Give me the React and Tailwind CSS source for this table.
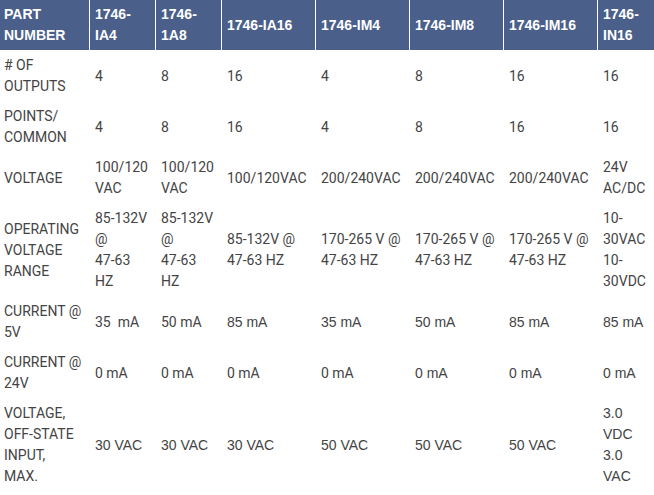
import React from "react";

const heads = [["PART", "NUMBER"], ["1746-", "IA4"], ["1746-", "1A8"], ["1746-IA16"], ["1746-IM4"], ["1746-IM8"], ["1746-IM16"], ["1746-", "IN16"]];

const rows = [
  { cells: [["# OF", "OUTPUTS"], ["4"], ["8"], ["16"], ["4"], ["8"], ["16"], ["16"]] },
  { cells: [["POINTS/", "COMMON"], ["4"], ["8"], ["16"], ["4"], ["8"], ["16"], ["16"]] },
  { cells: [["VOLTAGE"], ["100/120", "VAC"], ["100/120", "VAC"], ["100/120VAC"], ["200/240VAC"], ["200/240VAC"], ["200/240VAC"], ["24V", "AC/DC"]] },
  { cells: [["OPERATING", "VOLTAGE", "RANGE"], ["85-132V", "@", "47-63", "HZ"], ["85-132V", "@", "47-63", "HZ"], ["85-132V @", "47-63 HZ"], ["170-265 V @", "47-63 HZ"], ["170-265 V @", "47-63 HZ"], ["170-265 V @", "47-63 HZ"], ["10-", "30VAC", "10-", "30VDC"]] },
  { cells: [["CURRENT @", "5V"], ["35\u00a0 mA"], ["50 mA"], ["85 mA"], ["35 mA"], ["50 mA"], ["85 mA"], ["85 mA"]], arial: [3, 4, 5, 6, 7, 8] },
  { cells: [["CURRENT @", "24V"], ["0 mA"], ["0 mA"], ["0 mA"], ["0 mA"], ["0 mA"], ["0 mA"], ["0 mA"]], arial: [5, 6, 7, 8] },
  { cells: [["VOLTAGE,", "OFF-STATE", "INPUT,", "MAX."], ["30 VAC"], ["30 VAC"], ["30 VAC"], ["50 VAC"], ["50 VAC"], ["50 VAC"], ["3.0", "VDC", "3.0", "VAC"]], arial: [1, 2, 3, 4, 5, 6, 7] },
];

const grid = "grid grid-cols-[89px_66px_66px_94px_94px_94px_94px_51px]";

function Lines({ lines }) {
  return (
    <div className="whitespace-nowrap">
      {lines.map((l, i) => (
        <div key={i}>{l}</div>
      ))}
    </div>
  );
}

export default function App() {
  return (
    <div className="w-[654px] h-[495px] bg-white overflow-hidden font-['Roboto',sans-serif] text-[14px] leading-[21px] text-[#444444]">
      <div className={`${grid} bg-[#4a5f8a] text-white font-bold font-['Liberation_Sans',Arial,sans-serif] h-[50px]`}>
        {heads.map((h, i) => (
          <div
            key={i}
            className={`flex items-center pr-[5px] ${i > 0 ? "border-l border-white pl-[5px]" : "pl-[4px]"} ${i === 7 ? "w-[57px]" : ""}`}
          >
            <Lines lines={h} />
          </div>
        ))}
      </div>
      {rows.map((r, ri) => (
        <div key={ri} className={grid}>
          {r.cells.map((c, ci) => (
            <div
              key={ci}
              className={`flex items-center pt-[5px] pb-[4px] ${ci === 0 ? "pl-[4px] pr-[5px]" : "pl-[6px] pr-[5px]"} ${ci === 7 ? "w-[57px]" : ""} ${r.arial && r.arial.includes(ci) ? "font-['Liberation_Sans',Arial,sans-serif]" : ""}`}
            >
              <Lines lines={c} />
            </div>
          ))}
        </div>
      ))}
    </div>
  );
}
